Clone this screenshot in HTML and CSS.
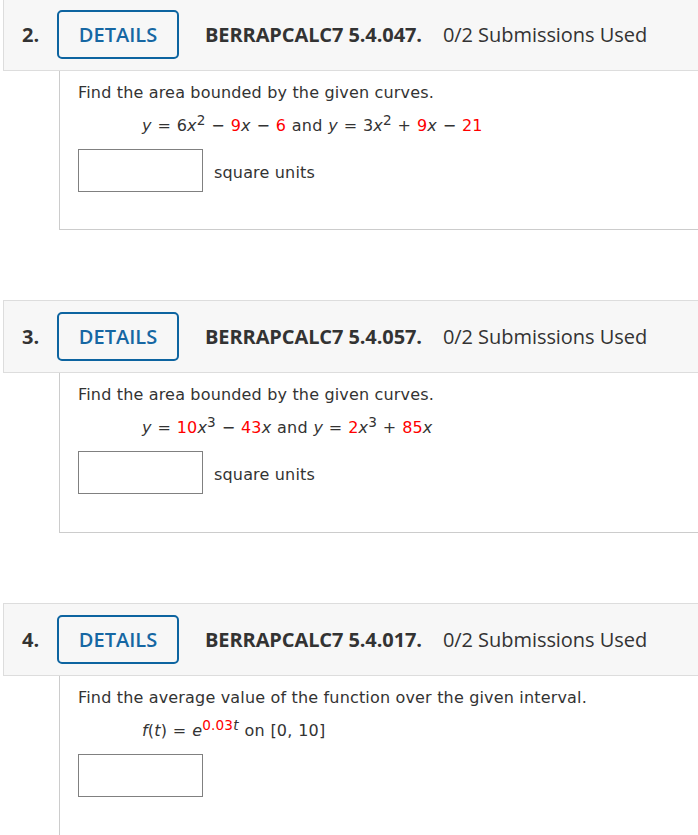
FILE: index.html
```html
<!DOCTYPE html>
<html>
<head>
<meta charset="utf-8">
<link rel="stylesheet" href="styles.css">
</head>
<body>
<div class="page">
  <div class="question first">
    <div class="q-header">
      <span class="q-num">2.</span>
      <button class="details">DETAILS</button>
      <span class="q-code">BERRAPCALC7 5.4.047.</span>
      <span class="q-subs">0/2 Submissions Used</span>
    </div>
    <div class="q-body">
      <p class="prompt">Find the area bounded by the given curves.</p>
      <p class="eq"><i>y</i> = 6<i>x</i><sup>2</sup> − <span class="r">9</span><i>x</i> − <span class="r">6</span> and <i>y</i> = 3<i>x</i><sup>2</sup> + <span class="r">9</span><i>x</i> − <span class="r">21</span></p>
      <div class="answer"><span class="box"></span><span class="unit">square units</span></div>
    </div>
  </div>

  <div class="question">
    <div class="q-header">
      <span class="q-num">3.</span>
      <button class="details">DETAILS</button>
      <span class="q-code">BERRAPCALC7 5.4.057.</span>
      <span class="q-subs">0/2 Submissions Used</span>
    </div>
    <div class="q-body">
      <p class="prompt">Find the area bounded by the given curves.</p>
      <p class="eq"><i>y</i> = <span class="r">10</span><i>x</i><sup>3</sup> − <span class="r">43</span><i>x</i> and <i>y</i> = <span class="r">2</span><i>x</i><sup>3</sup> + <span class="r">85</span><i>x</i></p>
      <div class="answer"><span class="box"></span><span class="unit">square units</span></div>
    </div>
  </div>

  <div class="question">
    <div class="q-header">
      <span class="q-num">4.</span>
      <button class="details">DETAILS</button>
      <span class="q-code">BERRAPCALC7 5.4.017.</span>
      <span class="q-subs">0/2 Submissions Used</span>
    </div>
    <div class="q-body">
      <p class="prompt">Find the average value of the function over the given interval.</p>
      <p class="eq"><i>f</i>(<i>t</i>) = <i>e</i><sup><span class="r">0.03</span><i>t</i></sup> on [0, 10]</p>
      <div class="answer"><span class="box"></span></div>
    </div>
  </div>
</div>
</body>
</html>
```

FILE: styles.css
```css
html, body {
  margin: 0;
  padding: 0;
  background: #ffffff;
  overflow: hidden;
}

.page {
  padding-left: 3px;
  margin-top: -2px;
}

.question {
  margin-bottom: 70px;
}

.q-header {
  display: flex;
  align-items: center;
  height: 71px;
  background: #f7f7f7;
  border: 1px solid #dddddd;
  margin-right: -20px;
  padding-left: 18px;
  font-family: "Open Sans", "Noto Sans", sans-serif;
  font-size: 20px;
  color: #333333;
}

.q-num {
  font-weight: 700;
  width: 35px;
}

.details {
  width: 122px;
  height: 49px;
  box-sizing: border-box;
  border: 2px solid #0d64a0;
  border-radius: 5px;
  background: #f7f7f7;
  color: #1667a3;
  font-family: "Open Sans", "Noto Sans", sans-serif;
  font-size: 20px;
  font-weight: 600;
  padding: 0;
  margin-right: 26px;
}

.q-code {
  font-weight: 700;
  letter-spacing: -0.1px;
  margin-right: 21px;
}

.q-subs {
  font-weight: 400;
  letter-spacing: -0.05px;
}

.q-body {
  margin-left: 56px;
  border-left: 1px solid #cccccc;
  border-bottom: 1px solid #cccccc;
  height: 160px;
  box-sizing: border-box;
  padding: 11px 0 0 18px;
  font-family: "DejaVu Sans", Verdana, sans-serif;
  font-size: 16px;
  color: #333333;
}

.first .q-body {
  height: 159px;
}

.prompt {
  margin: 0;
  line-height: 22px;
  letter-spacing: 0.17px;
}

.eq {
  margin: 11px 0 0 64px;
  line-height: 22px;
  letter-spacing: 0.17px;
  word-spacing: 0.5px;
}

.eq sup {
  font-size: 0.85em;
  line-height: 0;
  vertical-align: 0.45em;
}

.r {
  color: #ff0000;
}

.answer {
  display: flex;
  align-items: center;
  margin-top: 12px;
}

.box {
  display: block;
  width: 125px;
  height: 43px;
  box-sizing: border-box;
  border: 1px solid #808080;
  background: #ffffff;
}

.unit {
  margin-left: 11px;
  padding-top: 3px;
  letter-spacing: 0.17px;
}
```
